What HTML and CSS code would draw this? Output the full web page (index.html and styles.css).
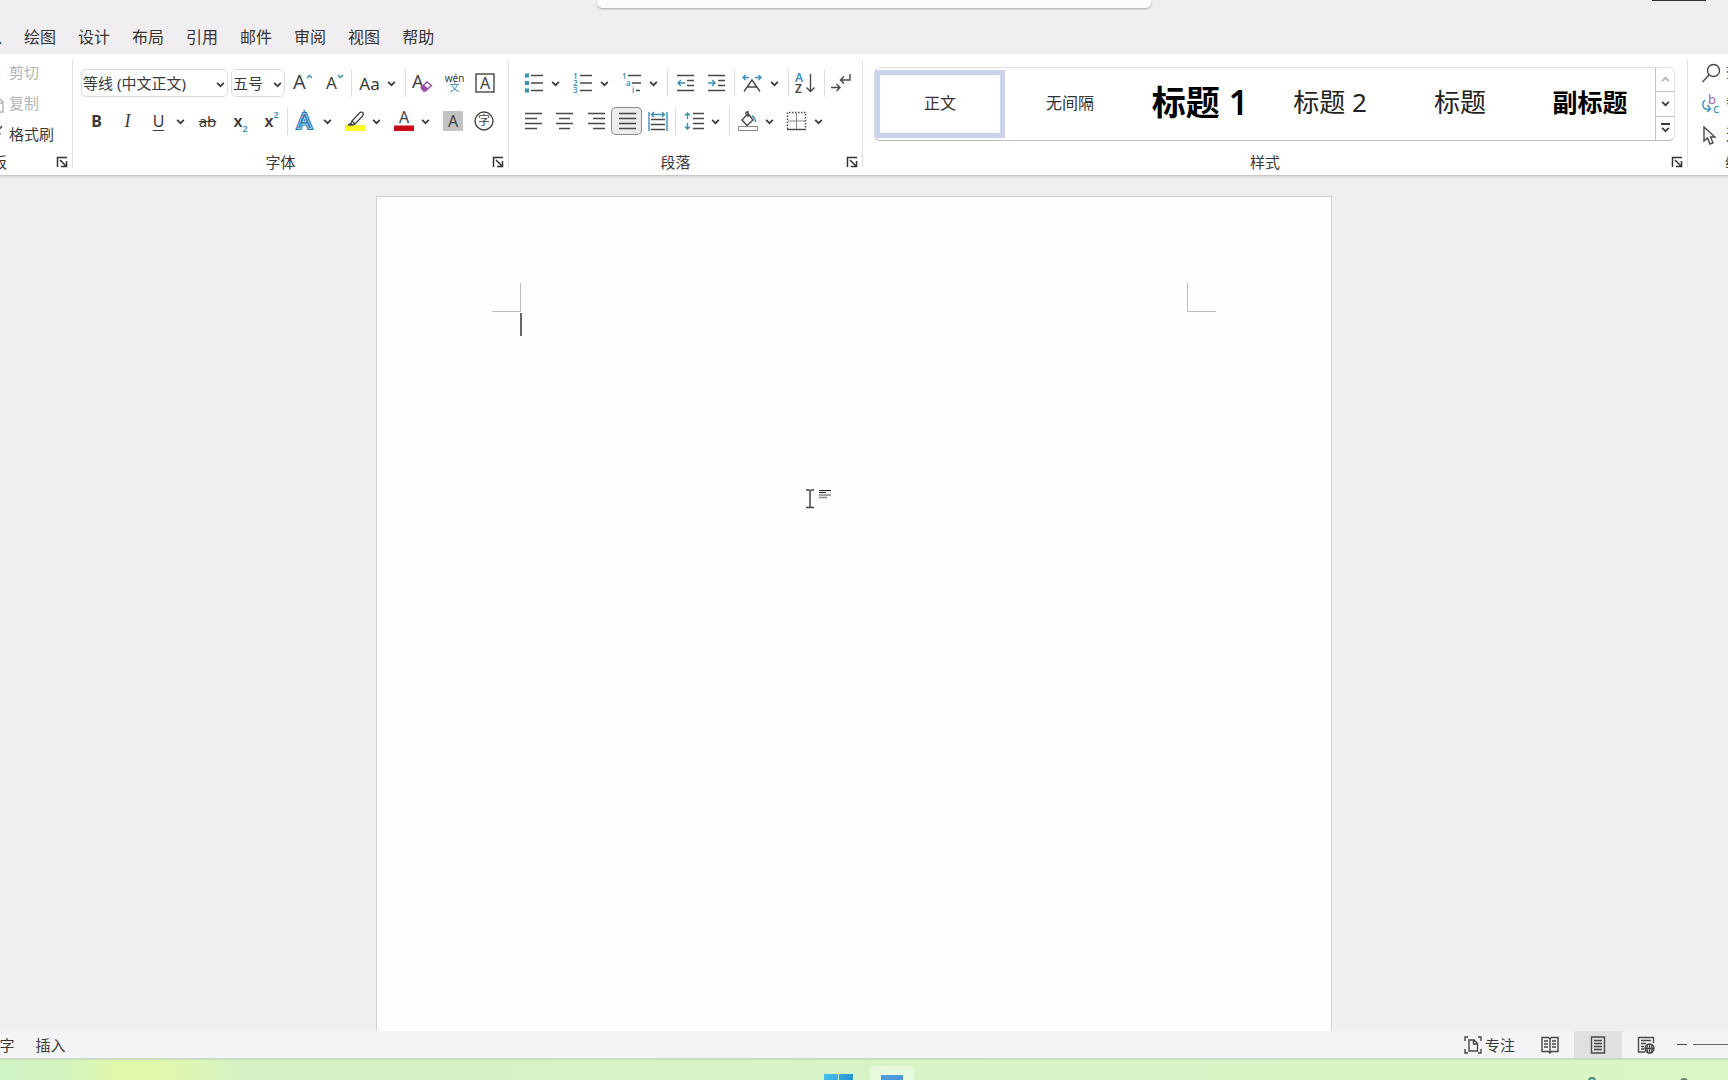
FILE: index.html
```html
<!DOCTYPE html>
<html lang="zh-CN">
<head>
  <meta charset="UTF-8" />
  <meta name="viewport" content="width=device-width, initial-scale=1.0" />
  <title>文档</title>
  <link rel="stylesheet" href="styles.css">
</head>
<body>
  <svg class="symbols" aria-hidden="true">
    <symbol id="chev" viewBox="0 0 8 8"><path d="M1 2.5l3 3 3-3" fill="none" stroke="currentColor" stroke-width="1.5"/></symbol>
    <symbol id="launch" viewBox="0 0 12 12"><path d="M1.5 11V1.5H11M4 4l6 6M10.5 5v5.5H5" fill="none" stroke="currentColor" stroke-width="1.5"/></symbol>
  </svg>

  <header class="titlebar">
    <div></div>
    <input class="search" type="search" aria-label="搜索">
    <button class="minimize" aria-label="最小化"></button>
  </header>

  <nav class="tabs">
    <a href="#insert">插入</a>
    <a href="#draw">绘图</a>
    <a href="#design">设计</a>
    <a href="#layout">布局</a>
    <a href="#ref">引用</a>
    <a href="#mail">邮件</a>
    <a href="#review">审阅</a>
    <a href="#view">视图</a>
    <a href="#help">帮助</a>
  </nav>

  <div class="ribbon">
    <!-- 剪贴板 -->
    <section class="group clipboard">
      <div class="list">
        <button disabled><svg class="icon" viewBox="0 0 20 20"><circle cx="6" cy="15" r="2.5"/><circle cx="13" cy="15" r="2.5"/><path d="M7 13l6-11M12 13L6 2"/></svg>剪切</button>
        <button disabled><svg class="icon" viewBox="0 0 20 20"><path d="M8 5h7l4 4v10H8zM14 5v5h5M11 12h5M11 15h5M8 15H4V3h7"/></svg>复制</button>
        <button><svg class="icon" viewBox="0 0 20 20"><path d="M18 2l-5 6M11 6l5 4-2 3-5-4zM9 9l-6 5 6 4 5-5"/></svg>格式刷</button>
      </div>
      <div class="group-foot"><span>剪贴板</span><button aria-label="剪贴板设置"><svg><use href="#launch"/></svg></button></div>
    </section>

    <!-- 字体 -->
    <section class="group font">
      <div class="row">
        <label class="combo name"><select aria-label="字体"><option>等线 (中文正文)</option></select><svg><use href="#chev"/></svg></label>
        <label class="combo size"><select aria-label="字号"><option>五号</option></select><svg><use href="#chev"/></svg></label>
        <button class="tool" aria-label="增大字号"><svg class="icon" viewBox="0 0 20 20"><text x="0" y="16" font-size="20">A</text><path class="blue" d="M14 5l2.500-2.500L19 5"/></svg></button>
        <button class="tool" aria-label="减小字号"><svg class="icon" viewBox="0 0 20 20"><text x="2" y="16" font-size="17">A</text><path class="blue" d="M14 2l2.500 2.500L19 2"/></svg></button>
        <i class="sep"></i>
        <div class="split">
          <button class="tool aa" aria-label="更改大小写">Aa</button>
          <button class="caret" aria-label="更多大小写"><svg><use href="#chev"/></svg></button>
        </div>
        <i class="sep"></i>
        <button class="tool" aria-label="清除格式"><svg class="icon" viewBox="0 0 20 20"><text x="-2" y="15" font-size="18">A</text><path class="purple" d="M7 14.500l6-5.500 4.500 3.500-6 5.500H9.500z"/><path class="purple-fill" d="M7 14.500l3-2.500 4.500 3.500-3 2.500H9.500z"/></svg></button>
        <button class="tool pinyin" aria-label="拼音指南"><span>wén</span><span>文</span></button>
        <button class="tool" aria-label="字符边框"><svg class="icon" viewBox="0 0 20 20"><rect x="0" y="1" width="18" height="18"/><text x="4" y="16" font-size="16">A</text></svg></button>
      </div>
      <div class="row">
        <button class="tool bold">B</button>
        <button class="tool italic">I</button>
        <div class="split">
          <button class="tool underline">U</button>
          <button class="caret" aria-label="下划线样式"><svg><use href="#chev"/></svg></button>
        </div>
        <button class="tool strike">ab</button>
        <button class="tool script">x<sub>2</sub></button>
        <button class="tool script">x<sup>2</sup></button>
        <i class="sep"></i>
        <div class="split">
          <button class="tool" aria-label="文本效果"><svg class="icon" viewBox="0 0 20 20"><text class="effect-out" x="2" y="17" font-size="20">A</text><text class="effect-in" x="2" y="17" font-size="20">A</text></svg></button>
          <button class="caret" aria-label="更多文本效果"><svg><use href="#chev"/></svg></button>
        </div>
        <div class="split">
          <button class="tool" aria-label="突出显示"><svg class="icon" viewBox="0 0 20 20"><path class="yellow" d="M0 14h20v6H0z"/><path d="M7 10l8-8.500q2-1 3 .5t-.5 3L10 13zM7 10l-1 2.500 1.500 1.500L10 13M6 12.500L3 14h4"/></svg></button>
          <button class="caret" aria-label="突出显示颜色"><svg><use href="#chev"/></svg></button>
        </div>
        <div class="split">
          <button class="tool" aria-label="字体颜色"><svg class="icon" viewBox="0 0 20 20"><text x="5" y="12" font-size="16">A</text><path class="red" d="M0 14.500h20v5.500H0z"/></svg></button>
          <button class="caret" aria-label="更多字体颜色"><svg><use href="#chev"/></svg></button>
        </div>
        <button class="tool" aria-label="字符底纹"><svg class="icon" viewBox="0 0 20 20"><path class="shade" d="M0 0h20v20H0z"/><text x="5" y="16" font-size="16">A</text></svg></button>
        <button class="tool" aria-label="带圈字符"><svg class="icon" viewBox="0 0 20 20"><circle cx="10" cy="10" r="9"/><text x="4" y="14" font-size="12">字</text></svg></button>
      </div>
      <div class="group-foot"><span>字体</span><button aria-label="字体设置"><svg><use href="#launch"/></svg></button></div>
    </section>

    <!-- 段落 -->
    <section class="group paragraph">
      <div class="row">
        <div class="split">
          <button class="tool" aria-label="项目符号"><svg class="icon" viewBox="0 0 20 20"><path d="M7 2.500h12M7 10h12M7 17.500h12"/><path class="blue-fill" d="M1 .5h4v4H1zM1 8h4v4H1zM1 15.500h4v4H1z"/></svg></button>
          <button class="caret" aria-label="更多项目符号"><svg><use href="#chev"/></svg></button>
        </div>
        <div class="split">
          <button class="tool" aria-label="编号"><svg class="icon" viewBox="0 0 20 20"><path d="M7 2.500h12M7 10h12M7 17.500h12"/><text class="num" x="0" y="6">1</text><text class="num" x="0" y="13">2</text><text class="num" x="0" y="20">3</text></svg></button>
          <button class="caret" aria-label="更多编号"><svg><use href="#chev"/></svg></button>
        </div>
        <div class="split">
          <button class="tool" aria-label="多级列表"><svg class="icon" viewBox="0 0 20 20"><path d="M6 2.500h13M10 10h9M14 17.500h4"/><text class="num" x="0" y="6">1</text><text class="num" x="4" y="13">a</text><text class="num" x="10" y="20">i</text></svg></button>
          <button class="caret" aria-label="更多多级列表"><svg><use href="#chev"/></svg></button>
        </div>
        <i class="sep"></i>
        <button class="tool" aria-label="减少缩进"><svg class="icon" viewBox="0 0 20 20"><path d="M1 2.500h17M11 7.500h7M11 12.500h7M1 17.500h17"/><path class="blue" d="M9 10H2M5 7l-3 3 3 3"/></svg></button>
        <button class="tool" aria-label="增加缩进"><svg class="icon" viewBox="0 0 20 20"><path d="M1 2.500h17M11 7.500h7M11 12.500h7M1 17.500h17"/><path class="blue" d="M1 10h7M5 7l3 3-3 3"/></svg></button>
        <i class="sep"></i>
        <div class="split">
          <button class="tool" aria-label="中文版式"><svg class="icon" viewBox="0 0 20 20"><path d="M1 18.500L9 7l8 11.500M4.500 14h9"/><path class="blue" d="M6 4.500H0M2.500 2L0 4.500 2.500 7M12 4.500h6M15.500 2L18 4.500 15.500 7"/></svg></button>
          <button class="caret" aria-label="更多版式"><svg><use href="#chev"/></svg></button>
        </div>
        <i class="sep"></i>
        <button class="tool" aria-label="排序"><svg class="icon" viewBox="0 0 20 20"><text class="sort-a" x="-2" y="9">A</text><text class="sort-z" x="-2" y="20">Z</text><path d="M13.500 1v17M9.500 14.500l4 4 4-4"/></svg></button>
        <i class="sep"></i>
        <button class="tool" aria-label="显示编辑标记"><svg class="icon" viewBox="0 0 20 20"><path d="M17 1v6H8M11 3.500L7.500 7l3.500 3.500M-2 14.500h9M3.500 11L7 14.500 3.500 18"/></svg></button>
      </div>
      <div class="row">
        <button class="tool" aria-label="左对齐"><svg class="icon" viewBox="0 0 20 20"><path d="M1 2.500h17M1 7.500h12M1 12.500h17M1 17.500h12"/></svg></button>
        <button class="tool" aria-label="居中"><svg class="icon" viewBox="0 0 20 20"><path d="M1 2.500h17M4 7.500h11M1 12.500h17M4 17.500h11"/></svg></button>
        <button class="tool" aria-label="右对齐"><svg class="icon" viewBox="0 0 20 20"><path d="M2 2.500h17M7 7.500h12M2 12.500h17M7 17.500h12"/></svg></button>
        <button class="tool active" aria-label="两端对齐"><svg class="icon" viewBox="0 0 20 20"><path d="M2 2.500h17M2 7.500h17M2 12.500h17M2 17.500h17"/></svg></button>
        <button class="tool" aria-label="分散对齐"><svg class="icon" viewBox="0 0 20 20"><path d="M3 8.500h14M3 13.500h14M3 18.500h14"/><path class="blue" d="M1 1v19M19 1v19M3.500 3.500h13M6 1L3.500 3.500 6 6M14 1l2.500 2.500L14 6"/></svg></button>
        <i class="sep"></i>
        <div class="split">
          <button class="tool" aria-label="行距"><svg class="icon" viewBox="0 0 20 20"><path d="M9 2.500h11M9 7.500h11M9 12.500h11M9 17.500h11"/><path class="blue" d="M3.500 2v6M1 4.500L3.500 2 6 4.500M3.500 12v6M1 15.500L3.500 18 6 15.500"/></svg></button>
          <button class="caret" aria-label="更多行距"><svg><use href="#chev"/></svg></button>
        </div>
        <i class="sep"></i>
        <div class="split">
          <button class="tool" aria-label="底纹"><svg class="icon" viewBox="0 0 20 20"><path d="M10 2.500l5 6.500-6 5.500L4 9zM10 6V.8Q8 .5 7.500 3"/><path class="blue" d="M14 5q3 1 3.500 6"/><path class="thin" d="M.5 15.500h19v4H.5z"/></svg></button>
          <button class="caret" aria-label="更多底纹"><svg><use href="#chev"/></svg></button>
        </div>
        <div class="split">
          <button class="tool" aria-label="边框"><svg class="icon" viewBox="0 0 20 20"><path class="dots" d="M.5 18V1.500h18V18"/><path class="thin" d="M9.500 2v16M1 10h17"/><path d="M0 18.500h19"/></svg></button>
          <button class="caret" aria-label="更多边框"><svg><use href="#chev"/></svg></button>
        </div>
      </div>
      <div class="group-foot"><span>段落</span><button aria-label="段落设置"><svg><use href="#launch"/></svg></button></div>
    </section>

    <!-- 样式 -->
    <section class="group styles">
      <div class="gallery">
        <button class="style selected">正文</button>
        <button class="style">无间隔</button>
        <button class="style h1">标题 1</button>
        <button class="style h2">标题 2</button>
        <button class="style h2">标题</button>
        <button class="style h2 strong">副标题</button>
        <div class="scroller">
          <button class="up" aria-label="上一行" disabled><svg><use href="#chev"/></svg></button>
          <button aria-label="下一行"><svg><use href="#chev"/></svg></button>
          <button class="more" aria-label="其他"><svg><use href="#chev"/></svg></button>
        </div>
      </div>
      <div class="group-foot"><span>样式</span><button aria-label="样式设置"><svg><use href="#launch"/></svg></button></div>
    </section>

    <!-- 编辑 -->
    <section class="group editing">
      <div class="list">
        <button><svg class="icon" viewBox="0 0 20 20"><circle cx="12.500" cy="8.500" r="6"/><path d="M8 13l-6.500 7"/></svg>查找</button>
        <button><svg class="icon" viewBox="0 0 20 20"><text class="rep-b" x="7" y="11">b</text><text class="rep-c" x="12" y="20">c</text><path class="blue" d="M4 7q-4 4-1 8 2 2 6 1M6.500 12l3 4-3.500 3"/></svg>替换</button>
        <button><svg class="icon" viewBox="0 0 20 20"><path d="M3 3v14l3.500-3 2.500 6 3-1.200-2.500-5.800H14z"/></svg>选择</button>
      </div>
      <div class="group-foot"><span>编辑</span></div>
    </section>
  </div>

  <main class="workspace">
    <article class="page">
      <i class="corner left"></i>
      <i class="corner right"></i>
      <div class="text" contenteditable="true" role="textbox" aria-label="正文"><span class="cursor"></span></div>
      <svg class="pointer" viewBox="0 0 28 20"><path d="M1 1h3.500M5.500 1H9M5 1v17.500M1 18.500h8" stroke="#444" stroke-width="1.500"/><path d="M14 1.500h12M14 3.500h7" stroke="#222" stroke-width="1.200"/><path d="M14 6h12M14 8.500h8" stroke="#888" stroke-width="1.500"/></svg>
    </article>
  </main>

  <footer class="status">
    <button class="words">0 个字</button>
    <button>插入</button>
    <div class="views">
      <button class="focus"><svg viewBox="0 0 18 18"><path d="M1 5V1h3M14 1h3v4M1 13v4h3M14 17h3v-4M5 4h5l3.500 3.500V15H5zM9.500 4v4h4"/></svg>专注</button>
      <button class="view" aria-label="阅读视图"><svg viewBox="0 0 18 18"><path d="M1 1.500h6.500L9 3l1.500-1.500H17v14h-6.500L9 17l-1.500-1.500H1zM9 3v14M3 5h4M3 8h4M3 11h4M11 5h4M11 8h4M11 11h4"/></svg></button>
      <button class="view on" aria-label="页面视图"><svg viewBox="0 0 18 18"><path d="M2.500 1h13v16h-13zM5 4.500h8M5 7.500h8M5 10.500h8M5 13.500h8"/></svg></button>
      <button class="view" aria-label="Web 版式"><svg viewBox="0 0 18 18"><path d="M8 16H1.500V1.500h15V7M4 4.500h10M4 7.500h5M4 10.500h3M4 13h3"/><circle cx="12.500" cy="12.500" r="4.500"/><path d="M8 12.500h9M12.500 8v9M10.500 9q-1.500 3.500 0 7M14.500 9q1.500 3.500 0 7"/></svg></button>
      <button class="zoom-out" aria-label="缩小"></button>
      <div class="zoom"><input type="range" min="0" max="100" value="50" aria-label="缩放"></div>
    </div>
  </footer>

  <div class="taskbar">
    <button class="start" aria-label="开始"><i></i><i></i></button>
    <button class="app" aria-label="应用"><i></i></button>
    <div class="tray"><i class="net"></i><i class="vol"></i></div>
  </div>
</body>
</html>
```

FILE: styles.css
```css
* {
  box-sizing: border-box;
}
body {
  margin: 0;
  height: 100vh;
  display: flex;
  flex-direction: column;
  overflow: hidden;
  font-family: "Noto Sans", "Noto Sans CJK SC", sans-serif;
  font-size: 15px;
  color: #3a3a3a;
  background: #f0eef1;
}
button, select, input {
  font: inherit;
  color: inherit;
  background: none;
  border: none;
  padding: 0;
  margin: 0;
}
svg {
  display: block;
  flex: none;
}
.symbols {
  display: none;
}

/* title bar and tabs */
.titlebar {
  display: grid;
  grid-template-columns: 1fr minmax(0, 554px) 1fr;
  padding-left: 20px;
  height: 20px;
}
.search {
  height: 8px;
  background: #fcfcfd;
  border-radius: 0 0 5px 5px;
  box-shadow: 0 1px 2px #aaa8ac;
  appearance: none;
}
.minimize {
  justify-self: end;
  width: 54px;
  height: 1px;
  margin-right: 22px;
  background: #333;
}
.tabs {
  display: flex;
  gap: 22px;
  height: 34px;
  margin-left: -30px;
  line-height: 34px;
  font-size: 16px;
  white-space: nowrap;
}
.tabs a {
  color: #333;
  text-decoration: none;
}

/* ribbon */
.ribbon {
  display: flex;
  height: 122px;
  padding: 6px 0 7px;
  background: #fff;
  border-bottom: 1px solid #c9c8ca;
  box-shadow: 0 1px 2px #d6d4d8;
  flex: none;
}
.group {
  display: flex;
  flex-direction: column;
  flex: none;
  border-right: 1px solid #e0dfe1;
  white-space: nowrap;
}
.clipboard {
  width: 156px;
  margin-left: -83px;
}
.font {
  padding: 9px 0 0 8px;
  width: 436px;
}
.paragraph {
  padding: 9px 0 0 9px;
  width: 354px;
}
.styles {
  flex: 1;
  padding: 7px 0 0 11px;
}
.editing {
  width: 40px;
  overflow: hidden;
  border: none;
}
.list {
  display: flex;
  flex-direction: column;
  gap: 5px;
  padding-left: 67px;
}
.editing .list {
  padding-left: 13px;
}
.list button {
  display: flex;
  align-items: center;
  gap: 5px;
  height: 26px;
  padding-bottom: 3px;
}
.list button:disabled {
  color: #b4b4b4;
}
.group-foot {
  display: flex;
  align-items: center;
  height: 12px;
  margin-top: auto;
  line-height: 12px;
}
.font .group-foot {
  margin-left: -8px;
}
.paragraph .group-foot {
  margin-left: -9px;
}
.styles .group-foot {
  margin-left: -11px;
}
.editing .group-foot {
  padding-left: 37px;
}
.group-foot span {
  flex: 1;
  text-align: center;
}
.group-foot button {
  width: 20px;
  padding-left: 4px;
}
.group-foot svg {
  width: 12px;
  height: 12px;
  color: #333;
}
.row {
  display: flex;
  height: 28px;
  margin-bottom: 10px;
}
.sep {
  width: 1px;
  margin: 0 2px;
  background: #dedde0;
}
.tool {
  display: flex;
  align-items: center;
  justify-content: center;
  width: 31px;
  height: 28px;
  border-radius: 5px;
  font-size: 16px;
}
.tool.active {
  background: #ececee;
  box-shadow: inset 0 0 0 1px #8a8a8a;
}
.tool:hover, .caret:hover {
  background: #ececee;
}
.split {
  display: flex;
  width: 49px;
}
.caret {
  width: 14px;
  padding-left: 2px;
}
.caret svg, .combo svg, .scroller svg {
  width: 9px;
  height: 9px;
}
.combo {
  position: relative;
  height: 28px;
  border: 1px solid #dddcdf;
  border-radius: 5px;
}
.combo select {
  width: 100%;
  height: 26px;
  padding-left: 1px;
  appearance: none;
}
.combo svg {
  position: absolute;
  right: 2px;
  top: 10px;
  pointer-events: none;
}
.combo.name {
  width: 147px;
  margin-right: 3px;
}
.combo.size {
  width: 54px;
  margin-right: 2px;
}

/* icons */
.icon {
  width: 20px;
  height: 20px;
  overflow: visible;
  fill: none;
  stroke: #484848;
  stroke-width: 1.4;
}
.list button:disabled .icon {
  stroke: #b4b4b4;
}
.icon text {
  fill: #444;
  stroke: none;
}
.icon .blue {
  stroke: #3a8fb7;
}
.icon .blue-fill {
  fill: #3a8fb7;
  stroke: none;
}
.icon .purple {
  stroke: #9a4fa8;
  fill: #fff;
}
.icon .purple-fill {
  stroke: none;
  fill: #9a4fa8;
}
.icon .yellow {
  fill: #fdfb2c;
  stroke: none;
}
.icon .red {
  fill: #c80a17;
  stroke: none;
}
.icon .shade {
  fill: #c3c3c3;
  stroke: none;
}
.icon .thin {
  stroke-width: 1;
  stroke: #888;
}
.icon .dots {
  stroke-dasharray: 1.5 1.5;
}
.icon .num {
  fill: #3a8fb7;
  font-size: 8px;
  font-weight: 600;
}
.icon .effect-out {
  fill: #2d79b5;
  stroke: #2d79b5;
  stroke-width: 4;
}
.icon .effect-in {
  stroke: #b5dcf2;
  stroke-width: 1.6;
  paint-order: stroke;
  fill: #2d79b5;
}
.icon .sort-a, .icon .sort-z {
  font-size: 12px;
  font-weight: 600;
}
.icon .sort-a {
  fill: #3a8fb7;
}
.icon .rep-b, .icon .rep-c {
  font-size: 13px;
  fill: #a65bb5;
}
.icon .rep-c {
  fill: #3a8fb7;
}
.aa {
  font-size: 17px;
}
.pinyin {
  flex-direction: column;
  font-size: 10px;
  line-height: 9px;
}
.pinyin span:last-child {
  color: #3a8fb7;
}
.bold {
  font-weight: 700;
}
.italic {
  font-family: "Liberation Serif", serif;
  font-style: italic;
  font-size: 18px;
}
.underline {
  text-decoration: underline;
  text-underline-offset: 3px;
}
.strike {
  font-size: 15px;
  text-decoration: line-through;
}
.script {
  padding-left: 4px;
  font-weight: 600;
}
.script sub, .script sup {
  color: #3a8fb7;
  font-size: 9px;
  line-height: 9px;
}
.script sub {
  align-self: flex-end;
  margin-bottom: 2px;
}
.script sup {
  align-self: flex-start;
  margin-top: 3px;
}

/* style gallery */
.gallery {
  display: grid;
  grid-template-columns: repeat(6, minmax(0, 1fr)) 19px;
  height: 74px;
  margin-right: 12px;
  border: 1px solid #e0dfe2;
  border-bottom-color: #bebdc0;
  border-radius: 6px;
}
.style {
  margin: 2px 0;
  padding-bottom: 4px;
  font-size: 16px;
  color: #333;
}
.style.selected {
  border: 5px solid #cbd2ec;
}
.style.h1 {
  font-size: 34px;
  font-weight: 600;
  line-height: 40px;
  color: #000;
}
.style.h2 {
  font-size: 26px;
  line-height: 32px;
  color: #222;
}
.style.strong {
  font-size: 25px;
  font-weight: 600;
  color: #000;
}
.scroller {
  display: flex;
  flex-direction: column;
  border-left: 1px solid #c4c3c6;
}
.scroller button {
  flex: 1;
  display: flex;
  flex-direction: column;
  align-items: center;
  justify-content: center;
}
.scroller button + button {
  border-top: 1px solid #c4c3c6;
}
.scroller .up {
  color: #b4b4b4;
}
.scroller .up svg {
  transform: rotate(180deg);
}
.scroller .more::before {
  content: "";
  width: 9px;
  height: 2px;
  background: #3a3a3a;
}

/* document */
.workspace {
  flex: 1;
  min-height: 0;
  display: flex;
  justify-content: center;
  padding: 20px 20px 0 0;
}
.page {
  position: relative;
  width: 956px;
  padding: 116px 143px 0;
  background: #fefefe;
  border: 1px solid #d2d1d4;
  border-bottom: none;
}
.text {
  outline: none;
}
.cursor {
  display: block;
  width: 2px;
  height: 23px;
  background: #666;
}
.corner {
  position: absolute;
  top: 86px;
  width: 29px;
  height: 29px;
  border: 0 solid #bdbdbd;
  border-bottom-width: 1px;
}
.corner.left {
  left: 115px;
  border-right-width: 1px;
}
.corner.right {
  right: 115px;
  border-left-width: 1px;
}
.pointer {
  position: absolute;
  left: 428px;
  top: 292px;
  width: 28px;
  height: 20px;
}

/* status bar */
.status {
  flex: none;
  display: flex;
  height: 27px;
  background: #f4f3f5;
  white-space: nowrap;
  overflow: hidden;
}
.status button {
  display: flex;
  align-items: center;
  justify-content: center;
}
.words {
  margin: 0 21px 0 -28px;
}
.views {
  display: flex;
  margin-left: auto;
}
.status svg {
  width: 18px;
  height: 18px;
  fill: none;
  stroke: #484848;
  stroke-width: 1.4;
}
.focus {
  gap: 3px;
}
.view {
  width: 48px;
}
.focus + .view {
  margin-left: 11px;
}
.view.on {
  background: #e0dfe1;
}
.zoom-out {
  width: 10px;
  height: 1px;
  margin: 13px 6px 0 7px;
  background: #444;
}
.zoom {
  width: 35px;
  overflow: hidden;
}
.zoom input {
  width: 140px;
  height: 1px;
  margin-top: 13px;
  background: #666;
  display: block;
  appearance: none;
}

/* taskbar */
.taskbar {
  position: relative;
  flex: none;
  display: flex;
  justify-content: center;
  align-items: flex-start;
  gap: 17px;
  height: 22px;
  padding-left: 9px;
  border-top: 2px solid #cbdcc4;
  background: linear-gradient(90deg, #d0f3c6 0, #d4f4bd 4%, #e2f8a9 7%, #e0f7ae 10%, #d4f1c4 14%, #d6f3c8 40%, #d9f7c4 100%);
  overflow: hidden;
}
.start {
  display: flex;
  gap: 1px;
  margin-top: 14px;
}
.start i {
  width: 14px;
  height: 14px;
  background: linear-gradient(135deg, #49c3ee, #2d9fdc);
}
.start i + i {
  background: linear-gradient(135deg, #34a9dd, #1d86c8);
}
.app {
  display: flex;
  align-items: flex-start;
  width: 44px;
  height: 44px;
  padding: 9px 11px 0;
  border-radius: 4px;
  background: #e8fadc;
  margin-top: 6px;
}
.app i {
  flex: 1;
  height: 22px;
  background: #4f9add;
}
.tray {
  position: absolute;
  right: 134px;
  top: 17px;
  display: flex;
}
.tray i {
  width: 8px;
  height: 8px;
  border: 2px solid #4a8a80;
  border-radius: 50%;
}
.tray .vol {
  margin: 1px -94px 0 84px;
  border-color: #66806a;
}
```
